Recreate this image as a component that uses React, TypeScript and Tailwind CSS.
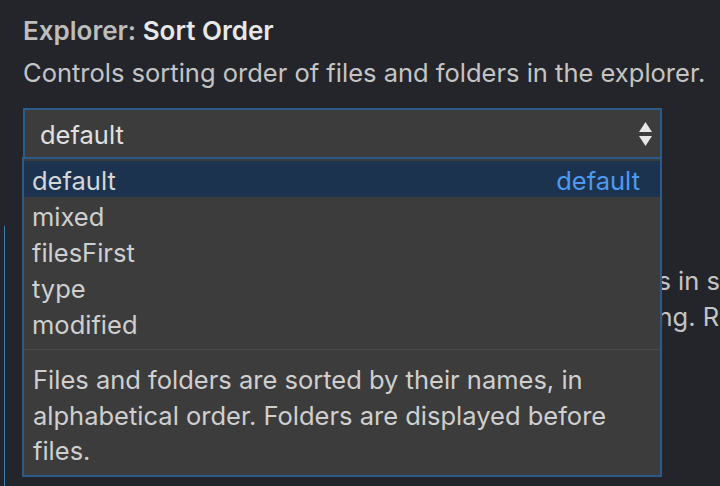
import React from "react";

const options = ["default", "mixed", "filesFirst", "type", "modified"];

export default function App() {
  return (
    <div
      className="relative w-[720px] h-[486px] overflow-hidden bg-[#24252a] text-[#cccccc]"
      style={{ fontFamily: "Inter, 'Noto Sans', sans-serif" }}
    >
      {/* Setting: Explorer: Sort Order */}
      <div className="pl-[23px] pt-[15px]">
        <div className="text-[26px] leading-[32px] font-semibold whitespace-nowrap">
          <span className="text-[#bdbdbd]">Explorer: </span>
          <span className="text-[#e8e8e8]">Sort Order</span>
        </div>
        <div className="mt-[10px] text-[25.5px] leading-[32px] text-[#c4c4c4] whitespace-nowrap">
          Controls sorting order of files and folders in the explorer.
        </div>
        <div className="mt-[19px] w-[639px] h-[51px] border-2 border-[#2d5a86] bg-[#3c3c3c] flex items-center justify-between pl-[15px] pr-[8px]">
          <span className="pt-[3px] text-[25.5px] text-[#e0e0e0]">default</span>
          <svg width="13" height="24" viewBox="0 0 13 24" fill="#e6e6e6">
            <path d="M6.5 0 L13 10 L0 10 Z" />
            <path d="M0 14 L13 14 L6.5 24 Z" />
          </svg>
        </div>
      </div>

      {/* Next setting (behind dropdown) */}
      <div className="flex mt-[67px]">
        <div className="ml-[4px] w-[3px] h-[300px] bg-[#3a80aa]" />
        <div className="ml-[653px] pt-[37px] text-[25.5px] leading-[36px] text-[#c4c4c4] whitespace-nowrap">
          <div>s in s</div>
          <div>ng. R</div>
        </div>
      </div>

      {/* Dropdown menu */}
      <div className="absolute left-[22px] top-[157px] w-[640px] h-[320px] border-2 border-[#2d5a86] bg-[#3c3c3c] flex flex-col">
        <div className="flex flex-col pt-[2px]">
          {options.map((o, i) => (
            <div
              key={o}
              className={
                "h-[36px] pt-[4px] flex items-center justify-between pl-[8px] pr-[20px] text-[25.5px] " +
                (i === 0 ? "bg-[#1c3350] text-[#d6d6d6]" : "text-[#cfcfcf]")
              }
            >
              <span>{o}</span>
              {i === 0 && <span className="text-[#4d9af0]">default</span>}
            </div>
          ))}
        </div>
        <div className="mt-[8px] h-[1px] bg-[#4a4a4a]" />
        <div className="pl-[9px] pr-[20px] pt-[12px] text-[25.5px] leading-[35.5px] text-[#cfcfcf]">
          Files and folders are sorted by their names, in alphabetical order. Folders are displayed before files.
        </div>
      </div>
    </div>
  );
}
